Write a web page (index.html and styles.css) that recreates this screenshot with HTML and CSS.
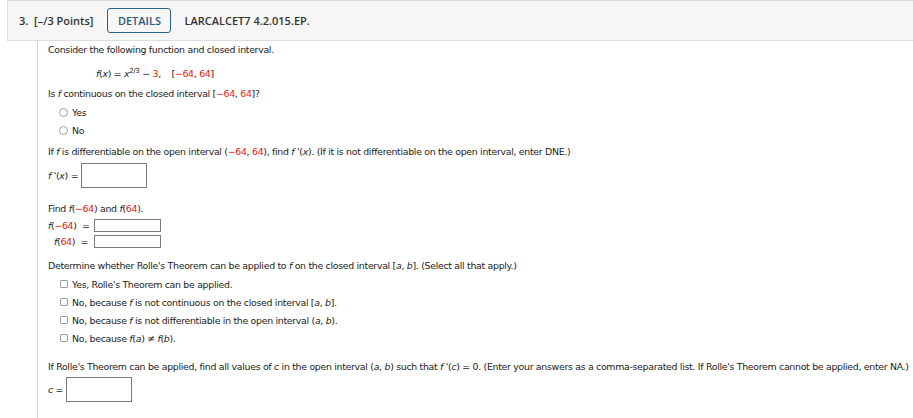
FILE: index.html
```html
<!DOCTYPE html>
<html>
<head>
<meta charset="utf-8">
<link rel="stylesheet" href="styles.css">
</head>
<body>
<div class="header">
  <span class="qnum">3.&nbsp;&nbsp;[–/3 Points]</span>
  <span class="details">DETAILS</span>
  <span class="code">LARCALCET7 4.2.015.EP.</span>
</div>
<div class="content">
  <p class="line l1">Consider the following function and closed interval.</p>
  <p class="line fx"><i>f</i>(<i>x</i>) = <i>x</i><sup>2/3</sup> − <span class="r">3</span>,&nbsp;&nbsp;&nbsp; [<span class="r">−64</span>, <span class="r">64</span>]</p>
  <p class="line">Is <i>f</i> continuous on the closed interval [<span class="r">−64</span>, <span class="r">64</span>]?</p>
  <div class="opt radio"><span class="rad"></span><span>Yes</span></div>
  <div class="opt radio"><span class="rad"></span><span>No</span></div>
  <p class="line l2">If <i>f</i> is differentiable on the open interval (<span class="r">−64</span>, <span class="r">64</span>), find <i>f</i> '(<i>x</i>). (If it is not differentiable on the open interval, enter DNE.)</p>
  <div class="ansrow big"><span><i>f</i> '(<i>x</i>) = </span><span class="box bigbox"></span></div>
  <p class="line l3">Find <i>f</i>(<span class="r">−64</span>) and <i>f</i>(<span class="r">64</span>).</p>
  <div class="pair">
    <div class="prow"><span class="plabel"><i>f</i>(<span class="r">−64</span>)&nbsp; =</span><span class="box smallbox"></span></div>
    <div class="prow"><span class="plabel"><i>f</i>(<span class="r">64</span>)&nbsp; =</span><span class="box smallbox"></span></div>
  </div>
  <p class="line l4">Determine whether Rolle's Theorem can be applied to <i>f</i> on the closed interval [<i>a</i>, <i>b</i>]. (Select all that apply.)</p>
  <div class="opt check"><span class="chk"></span><span>Yes, Rolle's Theorem can be applied.</span></div>
  <div class="opt check"><span class="chk"></span><span>No, because <i>f</i> is not continuous on the closed interval [<i>a</i>, <i>b</i>].</span></div>
  <div class="opt check"><span class="chk"></span><span>No, because <i>f</i> is not differentiable in the open interval (<i>a</i>, <i>b</i>).</span></div>
  <div class="opt check"><span class="chk"></span><span>No, because <i>f</i>(<i>a</i>) ≠ <i>f</i>(<i>b</i>).</span></div>
  <p class="line l5">If Rolle's Theorem can be applied, find all values of <i>c</i> in the open interval (<i>a</i>, <i>b</i>) such that <i>f</i> '(<i>c</i>) = 0. (Enter your answers as a comma-separated list. If Rolle's Theorem cannot be applied, enter NA.)</p>
  <div class="ansrow cbig"><span><i>c</i> = </span><span class="box cbox"></span></div>
</div>
</body>
</html>
```
FILE: styles.css
```css
html, body { margin: 0; padding: 0; background: #fff; }
body { width: 913px; height: 418px; overflow: hidden; }
.header {
  margin-left: 7px;
  height: 39px;
  background: #f6f6f6;
  border-top: 1px solid #dcdcdc;
  border-left: 1px solid #dcdcdc;
  border-bottom: 1px solid #dcdcdc;
  display: flex;
  align-items: center;
  font-family: "Open Sans", sans-serif;
  font-weight: 600;
  font-size: 11px;
  color: #333;
}
.qnum { margin-left: 11px; }
.details {
  margin-left: 14px;
  width: 62px;
  height: 23px;
  border: 1px solid #2a6189;
  border-radius: 3px;
  color: #2a5a7d;
  display: flex;
  align-items: center;
  justify-content: center;
}
.code { margin-left: 13px; }
.content {
  margin-left: 37px;
  border-left: 1px solid #d0d0d0;
  padding-left: 10px;
  padding-top: 0;
  height: 380px;
  font-family: "DejaVu Sans", Verdana, sans-serif;
  font-size: 9.4px;
  letter-spacing: -0.3px;
  color: #222;
}
.line { margin: 0; height: 18px; line-height: 18px; white-space: nowrap; }
.r { color: #e8160c; }
i { font-style: italic; }
sup { font-size: 7px; vertical-align: 4px; line-height: 0; }
.fx { margin-top: 6px; padding-left: 48px; }
.fx + .line { margin-top: 2px; }
.opt { display: flex; align-items: center; height: 18px; white-space: nowrap; }
.radio { padding-left: 11px; }
.rad {
  width: 7px; height: 7px; border: 1px solid #a0a0a0; border-radius: 50%;
  margin-right: 4px; background: #fff;
}
.check { padding-left: 12px; }
.chk {
  width: 6px; height: 6px; border: 1px solid #a0a0a0; border-radius: 1px;
  margin-right: 4px; background: #fff;
}
.l2 { margin-top: 4px; }
.ansrow { display: flex; align-items: center; white-space: nowrap; }
.big { margin-top: 1px; height: 26px; }
.box { display: inline-block; border: 1px solid #7a7a7a; background: #fff; box-sizing: border-box; }
.bigbox { width: 66px; height: 25px; margin-left: 3px; }
.l3 { margin-top: 12px; }
.pair { display: flex; flex-direction: column; gap: 3px; margin-top: 1px; }
.prow { display: flex; align-items: center; height: 13px; white-space: nowrap; }
.plabel { width: 40px; text-align: right; }
.smallbox { width: 67px; height: 13px; margin-left: 6px; }
.l4 { margin-top: 9px; }
.l5 { margin-top: 11px; }
.cbig { margin-top: 0; height: 26px; }
.cbox { width: 66px; height: 25px; margin-left: 3px; }
```
